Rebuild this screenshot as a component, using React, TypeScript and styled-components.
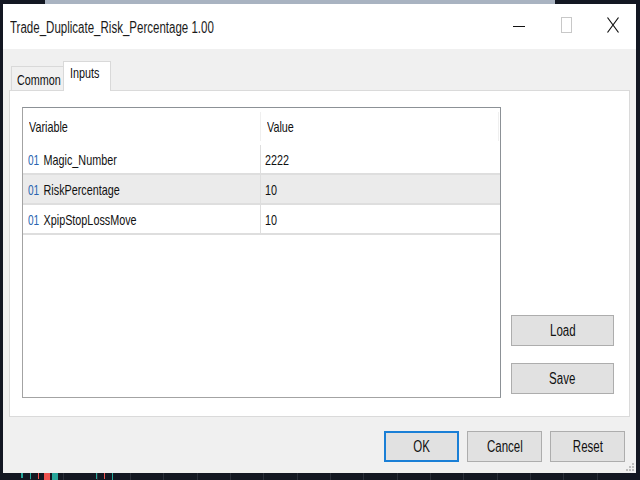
import styled, { createGlobalStyle } from "styled-components";

const GlobalStyle = createGlobalStyle`
  html, body {
    margin: 0;
    padding: 0;
    background: #131722;
    overflow: hidden;
  }
  body {
    font-family: "Liberation Sans", Arial, sans-serif;
  }
`;

const font = `"Liberation Sans", Arial, sans-serif`;

interface Param {
  name: string;
  value: string;
}

const params: Param[] = [
  { name: "Magic_Number", value: "2222" },
  { name: "RiskPercentage", value: "10" },
  { name: "XpipStopLossMove", value: "10" },
];

const App: React.FC = () => {
  return (
    <Screen>
      <GlobalStyle />
      <TopStrip>
        <StripBar />
      </TopStrip>
      <Window>
        <TitleBar>
          <Title>
            <Narrow>Trade_Duplicate_Risk_Percentage 1.00</Narrow>
          </Title>
          <Controls>
            <Ctrl>
              <svg width="14" height="16" viewBox="0 0 14 16">
                <path d="M1 9.5h12" stroke="#111" strokeWidth="1" />
              </svg>
            </Ctrl>
            <Ctrl>
              <svg width="14" height="16" viewBox="0 0 14 16">
                <rect x="2.5" y="0.5" width="10" height="15" fill="none" stroke="#c8c8c8" strokeWidth="1" />
              </svg>
            </Ctrl>
            <Ctrl>
              <svg width="14" height="16" viewBox="0 0 14 16">
                <path d="M1.5 0.5L12.5 15.5M12.5 0.5L1.5 15.5" stroke="#111" strokeWidth="1.2" />
              </svg>
            </Ctrl>
          </Controls>
        </TitleBar>
        <Body>
          <Tabs>
            <Tab w={53}>
              <Narrow>Common</Narrow>
            </Tab>
            <Tab w={48} active>
              <Narrow>Inputs</Narrow>
            </Tab>
          </Tabs>
          <Panel>
            <Table>
              <HeaderRow>
                <HeadCell>
                  <Narrow>Variable</Narrow>
                </HeadCell>
                <HeadCell divider>
                  <Narrow>Value</Narrow>
                </HeadCell>
              </HeaderRow>
              {params.map((p, index) => (
                <Row key={p.name} shaded={index === 1}>
                  <NameCell>
                    <Narrow>
                      <TypeTag>01</TypeTag>
                      {p.name}
                    </Narrow>
                  </NameCell>
                  <ValueCell>
                    <Narrow>{p.value}</Narrow>
                  </ValueCell>
                </Row>
              ))}
            </Table>
            <SideButtons>
              <Button>
                <Narrow center>Load</Narrow>
              </Button>
              <Button>
                <Narrow center>Save</Narrow>
              </Button>
            </SideButtons>
          </Panel>
          <Footer>
            <Button wide focused>
              <Narrow center>OK</Narrow>
            </Button>
            <Button wide>
              <Narrow center>Cancel</Narrow>
            </Button>
            <Button wide>
              <Narrow center>Reset</Narrow>
            </Button>
          </Footer>
          <Grip>
            <svg width="10" height="10" viewBox="0 0 10 10">
              {[
                [7, 1],
                [7, 4],
                [4, 4],
                [7, 7],
                [4, 7],
                [1, 7],
              ].map(([x, y], i) => (
                <rect key={i} x={x} y={y} width="2" height="2" fill="#bdbdbd" />
              ))}
            </svg>
          </Grip>
        </Body>
      </Window>
      <ChartStrip>
        <svg width="640" height="8" viewBox="0 0 640 8">
          {[30, 63, 97, 130, 163, 197, 230, 263, 297, 330, 363, 397, 430, 463, 497, 530, 563, 597].map((x) => (
            <rect key={x} x={x} y="0" width="1" height="8" fill="#2a2e39" />
          ))}
          <rect x="21" y="0" width="2" height="5" fill="#26a69a" />
          <rect x="30" y="0" width="1" height="6" fill="#26a69a" />
          <rect x="38" y="0" width="1" height="6" fill="#ef5350" />
          <rect x="44" y="0" width="6" height="8" fill="#ef5350" />
          <rect x="52" y="0" width="6" height="8" fill="#26a69a" />
          <rect x="96" y="0" width="1" height="6" fill="#26a69a" />
          <rect x="104" y="0" width="1" height="6" fill="#ef5350" />
          <rect x="112" y="0" width="1" height="8" fill="#26a69a" />
        </svg>
      </ChartStrip>
    </Screen>
  );
};

export default App;

const Screen = styled.div`
  width: 640px;
  height: 480px;
  display: flex;
  flex-direction: column;
  background: #131722;
`;

const TopStrip = styled.div`
  height: 4px;
  padding-left: 45px;
  padding-right: 85px;
  display: flex;
`;

const StripBar = styled.div`
  flex: 1;
  background: #a9b3c1;
`;

// the source font is a tall, condensed face; squeeze Liberation Sans to match
const Narrow = styled.span<{ center?: boolean }>`
  display: inline-block;
  white-space: nowrap;
  transform: scaleX(0.72);
  transform-origin: ${(p) => (p.center ? "center" : "left")} center;
`;

const Window = styled.div`
  margin-left: 3px;
  width: 633px;
  height: 469px;
  display: flex;
  flex-direction: column;
  background: #f0f0f0;
`;

const TitleBar = styled.div`
  height: 45px;
  background: #ffffff;
  display: flex;
  align-items: center;
  justify-content: space-between;
  padding-left: 7px;
`;

const Title = styled.div`
  font-family: ${font};
  font-size: 16px;
  color: #1a1a1a;
  margin-top: 2px;
`;

const Controls = styled.div`
  display: flex;
  align-items: center;
  height: 100%;
`;

const Ctrl = styled.div`
  width: 47px;
  height: 100%;
  display: flex;
  align-items: center;
  justify-content: center;
  margin-top: -4px;
`;

const Body = styled.div`
  flex: 1;
  position: relative;
  padding: 12px 6px 0 6px;
  display: flex;
  flex-direction: column;
`;

const Tabs = styled.div`
  display: flex;
  align-items: flex-end;
  height: 29px;
  padding-left: 2px;
`;

const Tab = styled.div<{ active?: boolean; w: number }>`
  font-family: ${font};
  font-size: 15px;
  color: #111;
  width: ${(p) => p.w}px;
  border: 1px solid #d9d9d9;
  border-bottom: none;
  background: ${(p) => (p.active ? "#ffffff" : "#f0f0f0")};
  height: ${(p) => (p.active ? "30px" : "24px")};
  padding: ${(p) => (p.active ? "2px 0 0 6px" : "4px 0 0 5px")};
  box-sizing: border-box;
  margin-left: ${(p) => (p.active ? "-1px" : "0")};
  margin-bottom: ${(p) => (p.active ? "-1px" : "0")};
  position: relative;
  z-index: ${(p) => (p.active ? 1 : 0)};
`;

const Panel = styled.div`
  height: 327px;
  box-sizing: border-box;
  background: #ffffff;
  border: 1px solid #dadada;
  display: flex;
  padding: 16px 15px 18px 12px;
`;

const Table = styled.div`
  flex: 1;
  border: 1px solid #a3a3a3;
  border-right-color: #8c9196;
  border-top-color: #8c9196;
  background: #ffffff;
  display: flex;
  flex-direction: column;
`;

const HeaderRow = styled.div`
  display: grid;
  grid-template-columns: 237px 1fr;
  height: 37px;
`;

const HeadCell = styled.div<{ divider?: boolean }>`
  font-family: ${font};
  font-size: 15px;
  color: #111;
  display: flex;
  align-items: center;
  padding-left: 6px;
  border-left: ${(p) => (p.divider ? "1px solid #efefef" : "none")};
  border-right: ${(p) => (p.divider ? "1px solid #efefef" : "none")};
  margin: 4px 1px 4px 0;
`;

const Row = styled.div<{ shaded?: boolean }>`
  display: grid;
  grid-template-columns: 237px 1fr;
  height: 28px;
  background: ${(p) => (p.shaded ? "#ebebeb" : "#ffffff")};
  border-bottom: 2px solid #dedede;
`;

const NameCell = styled.div`
  font-family: ${font};
  font-size: 15px;
  color: #111;
  display: flex;
  align-items: center;
  padding-left: 5px;
`;

const TypeTag = styled.span`
  color: #2a64b0;
  font-size: 14px;
  margin-right: 6px;
`;

const ValueCell = styled.div`
  font-family: ${font};
  font-size: 15px;
  color: #111;
  display: flex;
  align-items: center;
  padding-left: 4px;
  border-left: 1px solid #dedede;
`;

const SideButtons = styled.div`
  width: 103px;
  margin-left: 10px;
  display: flex;
  flex-direction: column;
  justify-content: flex-end;
  gap: 17px;
  padding-bottom: 4px;
`;

const Button = styled.div<{ wide?: boolean; focused?: boolean }>`
  font-family: ${font};
  font-size: 16px;
  color: #111;
  width: ${(p) => (p.wide ? "75px" : "103px")};
  height: 31px;
  box-sizing: border-box;
  background: #e1e1e1;
  border: ${(p) => (p.focused ? "2px solid #1a7fd6" : "1px solid #adadad")};
  display: flex;
  align-items: center;
  justify-content: center;
`;

const Footer = styled.div`
  display: flex;
  justify-content: flex-end;
  gap: 8px;
  padding: 14px 5px 0 0;
`;

const Grip = styled.div`
  position: absolute;
  right: 1px;
  bottom: 1px;
  width: 10px;
  height: 10px;
  line-height: 0;
`;

const ChartStrip = styled.div`
  height: 7px;
  overflow: hidden;
  line-height: 0;
`;
